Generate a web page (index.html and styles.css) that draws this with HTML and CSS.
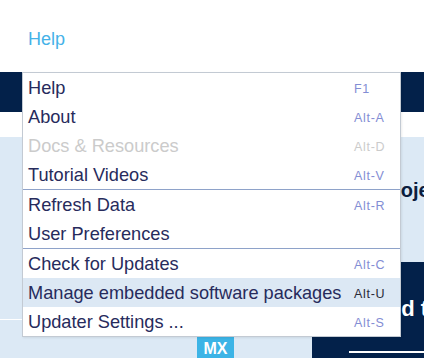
FILE: index.html
```html
<!DOCTYPE html>
<html lang="en">
<head>
  <meta charset="UTF-8" />
  <title>Help menu</title>
  <link rel="stylesheet" href="styles.css">
</head>
<body>
  <header class="topbar">
    <a class="top-link" href="#">Help</a>
  </header>
  <div class="navband"></div>
  <div class="strip"></div>

  <main class="home">
    <section class="col-left">
      <div class="rule"></div>
      <div class="mx-badge">MX</div>
    </section>
    <section class="col-right">
      <h2 class="col-title">New Project</h2>
      <div class="need-card">
        <div class="need-title">I need to :</div>
        <div class="need-line"></div>
      </div>
    </section>
  </main>

  <ul class="menu">
    <li class="menu-item"><span class="label">Help</span><span class="key">F1</span></li>
    <li class="menu-item"><span class="label">About</span><span class="key">Alt-A</span></li>
    <li class="menu-item disabled"><span class="label">Docs &amp; Resources</span><span class="key">Alt-D</span></li>
    <li class="menu-item"><span class="label">Tutorial Videos</span><span class="key">Alt-V</span></li>
    <li class="menu-sep"></li>
    <li class="menu-item"><span class="label">Refresh Data</span><span class="key">Alt-R</span></li>
    <li class="menu-item"><span class="label">User Preferences</span><span class="key"></span></li>
    <li class="menu-sep"></li>
    <li class="menu-item"><span class="label">Check for Updates</span><span class="key">Alt-C</span></li>
    <li class="menu-item active"><span class="label">Manage embedded software packages</span><span class="key">Alt-U</span></li>
    <li class="menu-item"><span class="label">Updater Settings ...</span><span class="key">Alt-S</span></li>
  </ul>
</body>
</html>
```

FILE: styles.css
```css
body {
  font-family: 'Liberation Sans', Arial, sans-serif;
  margin: 0;
  padding: 0;
  background-color: #dce9f5;
  overflow: hidden;
}
.topbar {
  height: 72px;
  box-sizing: border-box;
  padding: 29px 0 0 28px;
  background-color: white;
}
.top-link {
  font-size: 18px;
  color: #45b2e8;
  text-decoration: none;
}
.navband {
  height: 40px;
  background-color: #03214a;
}
.strip {
  height: 25px;
  background-color: white;
}
.home {
  height: 221px;
  overflow: hidden;
  display: grid;
  grid-template-columns: 312px 1fr;
}
.col-left {
  padding-top: 182px;
}
.rule {
  height: 1px;
  background-color: white;
}
.mx-badge {
  margin: 17px 0 0 197px;
  width: 37px;
  height: 24px;
  background-color: #3cb4e6;
  color: white;
  font-weight: bold;
  font-size: 16px;
  text-align: center;
  line-height: 24px;
}
.col-right {
  padding-top: 42px;
  overflow: hidden;
}
.col-title {
  margin: 0 0 60px 0;
  padding-left: 21px;
  font-size: 20px;
  line-height: 23px;
  font-weight: bold;
  color: #0b1e3f;
  white-space: nowrap;
}
.need-card {
  height: 120px;
  background-color: #03214a;
  padding-top: 34px;
  box-sizing: border-box;
}
.need-title {
  padding-left: 39px;
  font-size: 22px;
  font-weight: bold;
  color: white;
  white-space: nowrap;
}
.need-line {
  margin: 29px 0 0 37px;
  height: 2px;
  background-color: white;
}

.menu {
  position: absolute;
  left: 22px;
  top: 72px;
  width: 377px;
  margin: 0;
  padding: 0;
  list-style: none;
  background-color: white;
  border: 1px solid #c3cad3;
  box-shadow: 1px 1px 2px rgba(0,0,0,0.08);
}
.menu-item {
  display: flex;
  align-items: center;
  height: 29px;
  padding: 2px 0 0 5px;
  box-sizing: border-box;
  font-size: 18.2px;
  color: #272b5c;
}
.menu-item .label {
  flex: 1;
  white-space: nowrap;
}
.menu-item .key {
  width: 46px;
  font-size: 12.5px;
  letter-spacing: 0.7px;
  color: #838dd4;
}
.menu-item.disabled .label,
.menu-item.disabled .key {
  color: #cbcbcb;
}
.menu-item.active {
  background-color: #dce8f4;
}
.menu-item.active .key {
  color: #2a2a38;
}
.menu-sep {
  height: 1px;
  background-color: #8ea2c9;
}
```
